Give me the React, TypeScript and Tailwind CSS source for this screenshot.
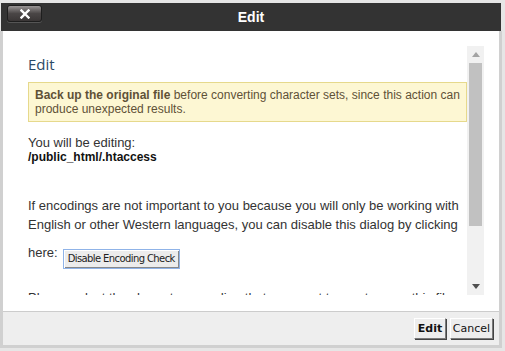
import React from "react";

export default function App() {
  return (
    <div className="w-[505px] h-[351px] bg-[#e6e6e6] pt-[3px] overflow-hidden" style={{ fontFamily: '"Liberation Sans", Arial, sans-serif' }}>
      <div className="w-[502px] h-[345px] flex flex-col">
        {/* Title bar */}
        <div className="ml-[1px] w-[500px] h-[28px] bg-[#333333] flex items-center relative shrink-0">
          <div className="absolute left-[6px] top-[2px] w-[35px] h-[17px] rounded-[3px] border border-[#1e1e1e] bg-gradient-to-b from-[#9a9696] via-[#4a4646] to-[#3a3636] flex items-center justify-center shadow-[0_1px_0_#555]">
            <svg width="10" height="10" viewBox="0 0 10 10">
              <path d="M1.5 1.5 L8.5 8.5 M8.5 1.5 L1.5 8.5" stroke="#ffffff" strokeWidth="2.4" strokeLinecap="square" />
            </svg>
          </div>
          <div className="w-full text-center text-white font-bold text-[14px] leading-none">Edit</div>
        </div>
        {/* Body */}
        <div className="flex-1 flex flex-col border-x-[3px] border-b-[3px] border-[#d0d0d0] bg-white">
          <div className="h-[280px] pt-[15px] pb-[16px] pl-[10px] pr-[15px] flex">
            <div className="flex-1 h-[249px] overflow-hidden pl-[15px] pt-[8px]">
              <div className="text-[15px] leading-[20px] text-[#2c4a66]" style={{ fontFamily: '"Open Sans", sans-serif' }}>Edit</div>
              <div className="mt-[8px] border border-[#e6d98c] bg-[#fdf7d3] px-[6px] pt-[5px] pb-[5px] text-[12px] leading-[14px] text-[#5f5137]">
                <b>Back up the original file</b> before converting character sets, since this action can produce unexpected results.
              </div>
              <div className="mt-[14px] text-[13px] leading-[14px] text-[#333333]">You will be editing:</div>
              <div className="text-[12px] leading-[14px] font-bold text-[#111111]">/public_html/.htaccess</div>
              <div className="mt-[32px] text-[13px] leading-[19px] text-[#333333]">
                If encodings are not important to you because you will only be working with English or other Western languages, you can disable this dialog by clicking
              </div>
              <div className="mt-[9px] flex items-start text-[13px] leading-[19px] text-[#333333]">
                <span>here:</span>
                <button className="ml-[5px] mt-[6px] h-[20px] px-[4px] border border-[#8fb3e8] bg-[#ececec] shadow-[inset_1px_1px_0_#ffffff,inset_-1px_-1px_0_#888888] text-[10px] tracking-[-0.6px] text-[#222222] leading-none" style={{ fontFamily: '"DejaVu Sans", sans-serif' }}>
                  Disable Encoding Check
                </button>
              </div>
              <div className="mt-[19px] text-[13px] leading-[19px] text-[#333333]">
                Please select the character encoding that you want to use to open this file.
              </div>
            </div>
            {/* scrollbar */}
            <div className="w-[17px] h-[249px] bg-[#f1f1f1] flex flex-col items-center">
              <div className="h-[17px] w-full flex items-center justify-center">
                <svg width="8" height="5" viewBox="0 0 8 5"><path d="M0 5 L4 0 L8 5 Z" fill="#a3a3a3" /></svg>
              </div>
              <div className="w-[13px] h-[163px] bg-[#c1c1c1]" />
              <div className="flex-1" />
              <div className="h-[17px] w-full flex items-center justify-center">
                <svg width="8" height="5" viewBox="0 0 8 5"><path d="M0 0 L8 0 L4 5 Z" fill="#505050" /></svg>
              </div>
            </div>
          </div>
          {/* Footer */}
          <div className="flex-1 bg-[#eeeeee] border-t border-[#cccccc] flex items-start justify-end pr-[6px] pt-[6px] gap-[4px]" style={{ fontFamily: '"DejaVu Sans", sans-serif' }}>
            <button className="h-[21px] w-[32px] bg-[#ededed] border border-t-[#ffffff] border-l-[#ffffff] border-b-[#7a7a7a] border-r-[#7a7a7a] shadow-[1px_1px_0_#444] text-[11px] font-bold text-[#111] leading-none">Edit</button>
            <button className="h-[21px] w-[43px] bg-[#ededed] border border-t-[#ffffff] border-l-[#ffffff] border-b-[#7a7a7a] border-r-[#7a7a7a] shadow-[1px_1px_0_#444] text-[11px] text-[#111] leading-none">Cancel</button>
          </div>
        </div>
      </div>
    </div>
  );
}
